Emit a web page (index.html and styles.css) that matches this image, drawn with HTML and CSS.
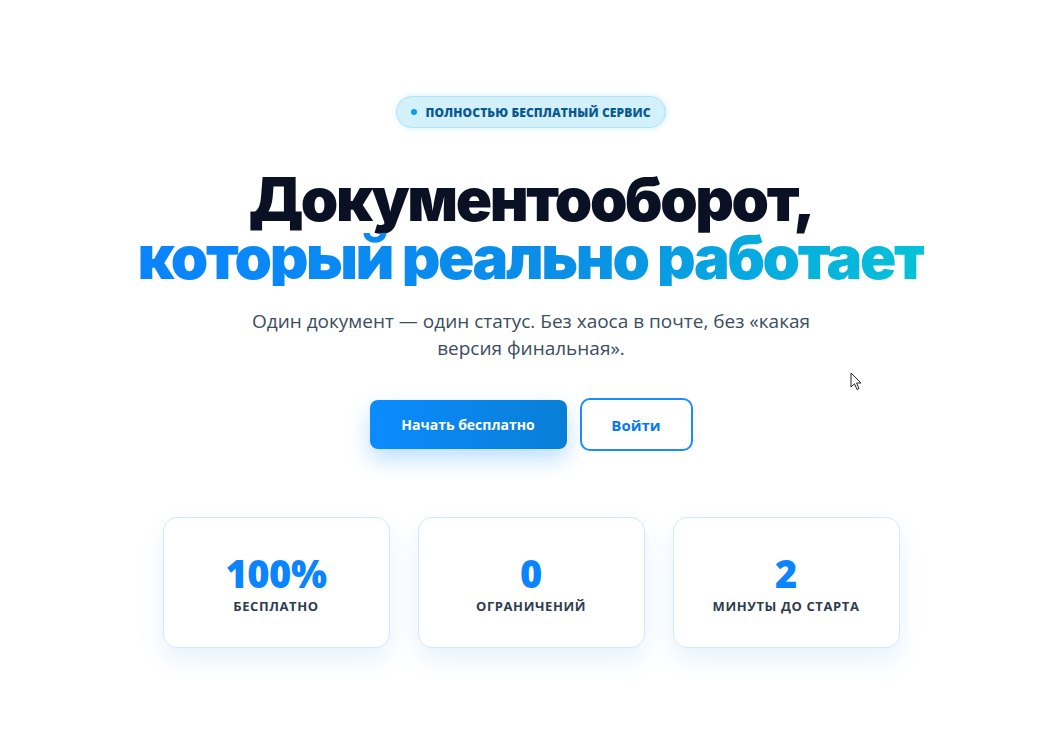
FILE: index.html
```
<!DOCTYPE html>
<html lang="ru">
<head>
<meta charset="utf-8">
<title>Документооборот</title>
<link rel="stylesheet" href="styles.css">
</head>
<body>
<main class="hero">
  <div class="badge"><span class="badge-dot"></span>Полностью бесплатный сервис</div>
  <h1 class="title">
    <span class="title-line">Документооборот,</span>
    <span class="title-line title-accent">который реально работает</span>
  </h1>
  <p class="lead">Один документ — один статус. Без хаоса в почте, без «какая версия финальная».</p>
  <div class="actions">
    <a class="btn btn-primary" href="#">Начать бесплатно</a>
    <a class="btn btn-outline" href="#">Войти</a>
  </div>
  <div class="stats">
    <div class="stat"><div class="stat-value">100%</div><div class="stat-label">Бесплатно</div></div>
    <div class="stat"><div class="stat-value">0</div><div class="stat-label">Ограничений</div></div>
    <div class="stat"><div class="stat-value">2</div><div class="stat-label">Минуты до старта</div></div>
  </div>
</main>
<svg class="cursor" width="12" height="19" viewBox="0 0 12 19"><path d="M1 1 L1 15 L4.5 11.8 L7 17.5 L9 16.6 L6.6 11 L11 11 Z" fill="#fff" stroke="#222" stroke-width="1" stroke-linejoin="round"/></svg>
</body>
</html>
```
FILE: styles.css
```
* { box-sizing: border-box; }
html, body { margin: 0; padding: 0; background: #ffffff; }
body {
  font-family: "Open Sans", "Noto Sans", sans-serif;
  color: #0b1124;
  width: 1062px;
  height: 733px;
  overflow: hidden;
  position: relative;
}
.hero {
  display: flex;
  flex-direction: column;
  align-items: center;
  padding-top: 96px;
}
.badge {
  display: flex;
  align-items: center;
  gap: 8px;
  height: 32px;
  padding: 0 14px 0 14px;
  border-radius: 16px;
  background: #d3f1fb;
  border: 1px solid #b0e3f5;
  box-shadow: 0 0 6px rgba(120, 210, 245, 0.35);
  color: #0b5a92;
  font-size: 12px;
  font-weight: 800;
  text-transform: uppercase;
  letter-spacing: 0.1px;
}
.badge-dot {
  width: 6px; height: 6px; border-radius: 50%;
  background: #0a9ff0;
}
.title {
  margin: 42px 0 0 0;
  display: flex;
  flex-direction: column;
  align-items: center;
  font-family: Inter, "Noto Sans", sans-serif;
  font-weight: 900;
  font-size: 60px;
  line-height: 58px;
  letter-spacing: -2.4px;
}
.title-line { display: block; white-space: nowrap; }
.title-accent {
  background: linear-gradient(90deg, #0a84ff 0%, #0a8fe6 55%, #05c2d8 100%);
  -webkit-background-clip: text;
  background-clip: text;
  color: transparent;
}
.lead {
  margin: 22px 0 0 0;
  max-width: 580px;
  text-align: center;
  font-size: 19px;
  line-height: 27px;
  color: #3b4d61;
}
.actions {
  display: flex;
  align-items: center;
  gap: 13px;
  margin-top: 36px;
}
.btn {
  display: flex;
  align-items: center;
  justify-content: center;
  text-decoration: none;
  font-weight: 700;
  font-size: 14px;
}
.btn-primary {
  width: 197px;
  height: 49px;
  border-radius: 8px;
  color: #fff;
  background: linear-gradient(90deg, #0b8bff, #087ed6);
  box-shadow: 0 10px 22px rgba(10, 140, 255, 0.28);
}
.btn-outline {
  width: 113px;
  height: 53px;
  border-radius: 10px;
  border: 2px solid #1a8cff;
  color: #0a78f0;
  background: #fff;
  font-size: 15px;
}
.stats {
  display: flex;
  gap: 28px;
  margin-top: 66px;
}
.stat {
  width: 227px;
  height: 131px;
  border-radius: 14px;
  border: 1.5px solid #d4e8fb;
  background: #fff;
  box-shadow: 0 12px 24px rgba(60, 150, 240, 0.12);
  display: flex;
  flex-direction: column;
  align-items: center;
  justify-content: center;
  gap: 2px;
}
.stat-value {
  font-size: 38px;
  line-height: 44px;
  font-weight: 800;
  color: #0a84ff;
  letter-spacing: -0.5px;
}
.stat-label {
  font-size: 13px;
  font-weight: 700;
  text-transform: uppercase;
  letter-spacing: 0.6px;
  color: #2d3c4f;
}
.cursor {
  position: absolute;
  left: 850px;
  top: 372px;
}
```
